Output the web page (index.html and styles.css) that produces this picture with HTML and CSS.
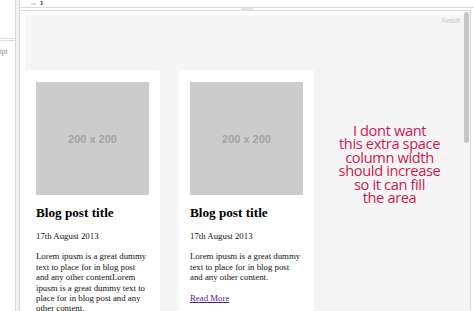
FILE: index.html
```html
<!DOCTYPE html>
<html lang="en">
<head>
    <meta charset="UTF-8">
    <title>Result</title>
    <link rel="stylesheet" href="styles.css">
</head>
<body>
    <div class="app">
        <div class="side">
            <div class="side-top"></div>
            <div class="side-label">ipt</div>
        </div>
        <div class="gutter"></div>
        <div class="main">
            <div class="main-top"><span class="fold"></span><span class="line-no">1</span></div>
            <div class="resizer"><span class="handle"></span></div>
            <div class="main-body">
                <div class="result">
                    <span class="result-label">Result</span>
                    <div class="result-inner">
                        <div class="card">
                            <div class="thumb">200 x 200</div>
                            <h2 class="card-title">Blog post title</h2>
                            <p class="card-date">17th August 2013</p>
                            <p class="card-text">Lorem ipusm is a great dummy text to place for in blog post and any other contentLorem ipusm is a great dummy text to place for in blog post and any other content.</p>
                        </div>
                        <div class="card">
                            <div class="thumb">200 x 200</div>
                            <h2 class="card-title">Blog post title</h2>
                            <p class="card-date">17th August 2013</p>
                            <p class="card-text">Lorem ipusm is a great dummy text to place for in blog post and any other content.</p>
                            <p class="card-text"><a href="#" class="read-more">Read More</a></p>
                        </div>
                        <div class="note">I dont want<br>this extra space<br>column width<br>should increase<br>so it can fill<br>the area</div>
                    </div>
                </div>
                <div class="scrollbar"><span class="thumb-bar"></span></div>
                <div class="edge"></div>
            </div>
        </div>
    </div>
</body>
</html>
```

FILE: styles.css
```css
body {
    margin: 0;
    font-family: 'Liberation Serif', 'Times New Roman', serif;
    background-color: #fff;
    overflow: hidden;
}
.app {
    display: flex;
    height: 311px;
    overflow: hidden;
}
.side {
    width: 15px;
    border-right: 1px solid #d9d9d9;
    background-color: #fff;
}
.side-top {
    height: 38px;
    border-bottom: 3px double #dcdcdc;
}
.side-label {
    font-family: 'Liberation Sans', Arial, sans-serif;
    font-size: 7px;
    color: #888;
    padding-top: 7px;
    line-height: 8px;
}
.gutter {
    width: 3px;
    background-color: #f2f2f2;
    border-right: 1px solid #d9d9d9;
}
.main {
    flex: 1;
    display: flex;
    flex-direction: column;
    min-width: 0;
}
.main-top {
    height: 7px;
    border-bottom: 1px solid #d9d9d9;
    display: flex;
    align-items: center;
    padding-left: 11px;
}
.fold {
    width: 5px;
    height: 2px;
    background-color: #ddd;
    margin-right: 4px;
}
.line-no {
    font-family: 'Liberation Sans', Arial, sans-serif;
    font-size: 6px;
    font-weight: bold;
    color: #333;
    line-height: 7px;
}
.resizer {
    height: 2px;
    display: flex;
    justify-content: center;
}
.handle {
    width: 12px;
    height: 2px;
    background-color: #e2e2e2;
}
.main-body {
    flex: 1;
    display: flex;
    min-height: 0;
}
.result {
    flex: 1;
    position: relative;
    border-top: 1px solid #d9d9d9;
    padding: 4px 0 0 5px;
    background-color: #fff;
    overflow: hidden;
}
.result-label {
    position: absolute;
    top: 6px;
    right: 3px;
    font-family: 'Liberation Sans', Arial, sans-serif;
    font-size: 6.5px;
    color: #c8c8c8;
}
.result-inner {
    height: 100%;
    background-color: #f5f5f5;
    padding-top: 55px;
    display: flex;
    align-items: flex-start;
    gap: 19px;
    box-sizing: border-box;
}
.card {
    width: 113px;
    padding: 12px 11px;
    background-color: #fff;
    border-radius: 2px;
    flex-shrink: 0;
}
.thumb {
    height: 113px;
    background-color: #cccccc;
    color: #a2a2a2;
    font-family: 'Liberation Sans', Arial, sans-serif;
    font-size: 11px;
    font-weight: bold;
    display: flex;
    align-items: center;
    justify-content: center;
}
.card-title {
    font-size: 13.2px;
    line-height: 15px;
    margin: 10px 0 11px;
}
.card-date,
.card-text {
    font-size: 8.8px;
    line-height: 10.4px;
    margin: 0 0 10px;
    color: #111;
}
.read-more {
    color: #551a8b;
}
.note {
    flex: 1;
    margin-top: 54px;
    padding-right: 17px;
    text-align: center;
    font-family: 'Open Sans', 'Noto Sans', sans-serif;
    font-size: 14.6px;
    line-height: 13.4px;
    letter-spacing: -0.35px;
    color: #d3174f;
}
.scrollbar {
    width: 7px;
    border-top: 1px solid #d9d9d9;
    background-color: #f4f4f4;
    padding-top: 1px;
    display: flex;
    justify-content: center;
}
.thumb-bar {
    width: 5px;
    height: 131px;
    border-radius: 3px;
    background-color: #c6c6c6;
}
.edge {
    width: 3px;
    border-left: 1px solid #d9d9d9;
    background-color: #fff;
}
```
